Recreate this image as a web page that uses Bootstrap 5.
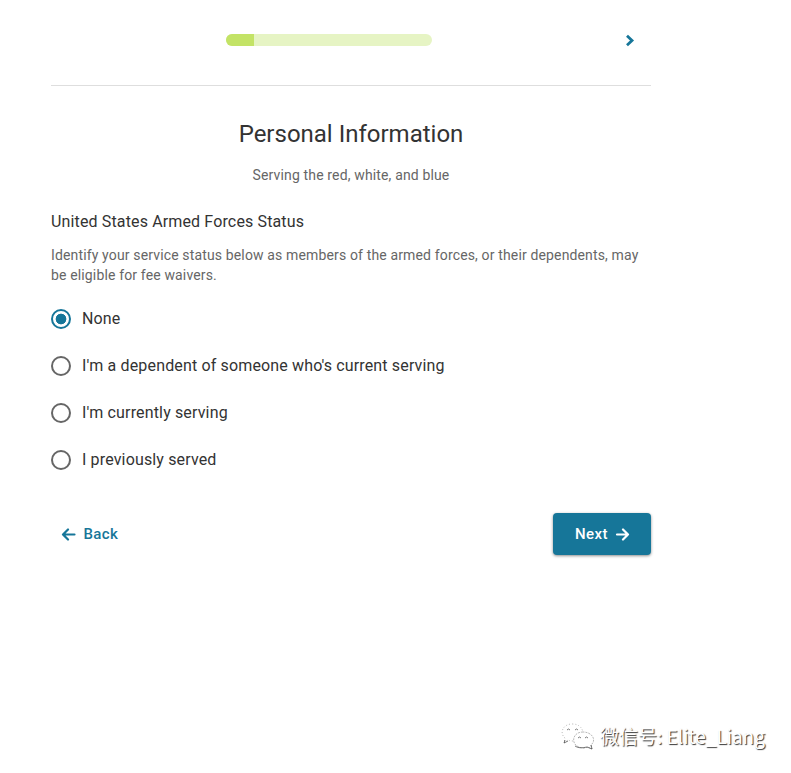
<!DOCTYPE html>
<html lang="en">
<head>
<meta charset="utf-8">
<meta name="viewport" content="width=device-width, initial-scale=1">
<title>Personal Information</title>
<link href="https://cdn.jsdelivr.net/npm/bootstrap@5.3.0/dist/css/bootstrap.min.css" rel="stylesheet">
<style>
body{font-family:Roboto,sans-serif;color:#333;background:#fff;min-height:773px;overflow:hidden}
.form-wrap{width:600px;margin-left:51px}
.top-bar{height:86px;border-bottom:1px solid #dedede;display:grid;grid-template-columns:175px 206px 1fr;padding-top:34px}
.top-bar .progress{height:12px;border-radius:6px;background:#e6f4c4}
.top-bar .progress-bar{background:#c3e366;width:13.4%}
.step-next{line-height:0;margin:0 16px 0 0}
h1{font-size:24px;line-height:32px;margin:32px 0 0}
.sub-text{font-size:14px;line-height:20px;color:#666;letter-spacing:.145px}
.tagline{margin:15px 0 0}
h2{font-size:16px;line-height:24px;letter-spacing:.14px;margin:25px 0 0}
.help{margin:11px 0 0}
.choices{margin-top:22px;gap:23px}
.choices .form-check{min-height:24px;padding:0;margin:0;gap:11px}
.choices .form-check-input{width:20px;height:20px;margin:0;float:none;border:2px solid #666;background:#fff}
.choices .form-check-input:checked{border-color:#167699;background:radial-gradient(circle,#167699 5px,#fff 5.7px)}
.choices label{font-size:16px;line-height:24px;letter-spacing:.15px}
.actions{margin-top:41px}
.actions .btn{font-size:15px;font-weight:500;line-height:20px;letter-spacing:.4px;border:0;height:42px}
.btn-back{color:#167699;padding:0 10px;gap:7.5px}
.btn-forward,.btn-forward:hover{width:98px;background:#167699;color:#fff;border-radius:4px;padding:0 0 0 1px;gap:7px;box-shadow:0 1px 3px rgba(0,0,0,.45)}
.account-tag{position:absolute;left:561px;top:721px;font:19px/30px "Noto Sans CJK SC",sans-serif;color:#fff;gap:6px;white-space:nowrap}
.account-tag span{text-shadow:1px 1px 1px #333}
</style>
</head>
<body>
<main class="form-wrap">
  <header class="top-bar">
    <span></span>
    <div class="progress"><div class="progress-bar"></div></div>
    <a href="#" class="step-next text-end" aria-label="Next section"><svg width="10" height="13" viewBox="0 0 10 13" fill="none" stroke="#167699" stroke-width="2.8"><path d="M2 1.800 7 6.500 2 11.200"/></svg></a>
  </header>
  <h1 class="text-center fw-normal">Personal Information</h1>
  <p class="sub-text tagline text-center">Serving the red, white, and blue</p>
  <h2 class="fw-normal">United States Armed Forces Status</h2>
  <p class="sub-text help">Identify your service status below as members of the armed forces, or their dependents, may be eligible for fee waivers.</p>
  <div class="choices d-flex flex-column">
    <div class="form-check d-flex align-items-center"><input class="form-check-input" type="radio" name="status" id="s1" checked><label for="s1">None</label></div>
    <div class="form-check d-flex align-items-center"><input class="form-check-input" type="radio" name="status" id="s2"><label for="s2">I'm a dependent of someone who's current serving</label></div>
    <div class="form-check d-flex align-items-center"><input class="form-check-input" type="radio" name="status" id="s3"><label for="s3">I'm currently serving</label></div>
    <div class="form-check d-flex align-items-center"><input class="form-check-input" type="radio" name="status" id="s4"><label for="s4">I previously served</label></div>
  </div>
  <div class="actions d-flex justify-content-between">
    <button class="btn btn-back d-flex align-items-center"><svg width="15" height="14" viewBox="0 0 15 14" fill="none" stroke="currentColor" stroke-width="2.2" stroke-linecap="round" stroke-linejoin="round"><path d="M13.500 7.500H2.500M7 2.500 2 7.500 7 12.500"/></svg>Back</button>
    <button class="btn btn-forward d-flex align-items-center justify-content-center">Next<svg width="15" height="14" viewBox="0 0 15 14" fill="none" stroke="currentColor" stroke-width="2.2" stroke-linecap="round" stroke-linejoin="round"><path d="M2 7.500h11M8 2.500 13 7.500 8 12.500"/></svg></button>
  </div>
</main>
<div class="account-tag d-flex align-items-center">
  <svg width="33" height="29" viewBox="0 0 33 29" fill="none" stroke="#999" stroke-width=".7"><path stroke-dasharray="1 2" d="M12 19Q9 19 7 18L3 21 4 16C-2 11 2 2 11 2Q20 2 22 10"/><path fill="#fff" stroke-dasharray="2 1" d="M22 10C10 10 9 25 22 26Q25 26 27 25L31 27 30 23C36 18 31 10 22 10Z"/><path stroke="#444" d="M6 8q1.500-2 3 0M14 8q1.500-2 3 0M17 16q1.500-2 3 0M24 16q1.500-2 3 0M4 18l-1 3 4-2M14 24q4 3 12 1l5 2-1-4"/></svg>
  <span>微信号: Elite_Liang</span>
</div>
<script src="https://cdn.jsdelivr.net/npm/bootstrap@5.3.0/dist/js/bootstrap.bundle.min.js"></script>
</body>
</html>
